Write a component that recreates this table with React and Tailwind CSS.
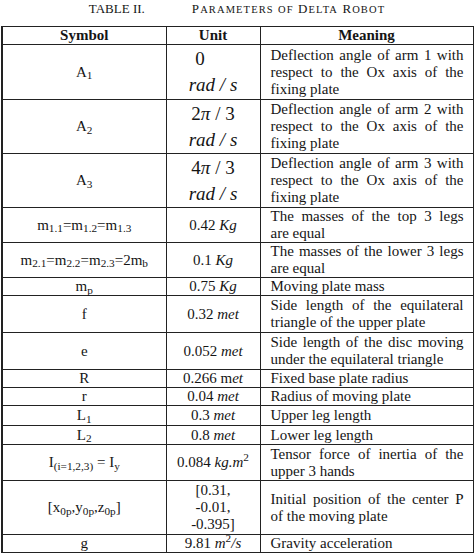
import React from "react";

function SmallCaps({ text }) {
  // manual small caps: source capitals stay full size, the rest shrink
  return (
    <span className="tracking-[1.1px]">
      {text.split(" ").map((word, i) => (
        <span key={i}>
          {i > 0 ? " " : ""}
          {word.split("").map((ch, j) =>
            ch === ch.toUpperCase() ? (
              <span key={j} className="text-[13px]">
                {ch}
              </span>
            ) : (
              <span key={j} className="text-[10.5px]">
                {ch.toUpperCase()}
              </span>
            )
          )}
        </span>
      ))}
    </span>
  );
}

function Angle({ top }) {
  return (
    <div className="text-[19px] leading-[26px]">
      <div>{top}</div>
      <div className="italic">rad / s</div>
    </div>
  );
}

const ROWS = [
  {
    h: "h-[55px]",
    sym: (
      <>
        A<sub>1</sub>
      </>
    ),
    unit: <Angle top={<span className="mr-[26px]">0</span>} />,
    mean: [
      "Deflection angle of arm 1 with",
      "respect to the Ox axis of the",
      "fixing plate",
    ],
  },
  {
    h: "h-[54px]",
    sym: (
      <>
        A<sub>2</sub>
      </>
    ),
    unit: (
      <Angle
        top={
          <>
            2<i>π</i> / 3
          </>
        }
      />
    ),
    mean: [
      "Deflection angle of arm 2 with",
      "respect to the Ox axis of the",
      "fixing plate",
    ],
  },
  {
    h: "h-[54px]",
    sym: (
      <>
        A<sub>3</sub>
      </>
    ),
    unit: (
      <Angle
        top={
          <>
            4<i>π</i> / 3
          </>
        }
      />
    ),
    mean: [
      "Deflection angle of arm 3 with",
      "respect to the Ox axis of the",
      "fixing plate",
    ],
  },
  {
    h: "h-[35px]",
    sym: (
      <>
        m<sub>1.1</sub>=m<sub>1.2</sub>=m<sub>1.3</sub>
      </>
    ),
    unit: (
      <>
        0.42 <i>Kg</i>
      </>
    ),
    mean: ["The masses of the top 3 legs", "are equal"],
  },
  {
    h: "h-[35px]",
    sym: (
      <>
        m<sub>2.1</sub>=m<sub>2.2</sub>=m<sub>2.3</sub>=2m<sub>b</sub>
      </>
    ),
    unit: (
      <>
        0.1 <i>Kg</i>
      </>
    ),
    mean: ["The masses of the lower 3 legs", "are equal"],
  },
  {
    h: "h-[18px]",
    sym: (
      <>
        m<sub>p</sub>
      </>
    ),
    unit: (
      <>
        0.75 <i>Kg</i>
      </>
    ),
    mean: ["Moving plate mass"],
  },
  {
    h: "h-[37px]",
    sym: "f",
    unit: (
      <>
        0.32 <i>met</i>
      </>
    ),
    mean: ["Side length of the equilateral", "triangle of the upper plate"],
  },
  {
    h: "h-[37px]",
    sym: "e",
    unit: (
      <>
        0.052 <i>met</i>
      </>
    ),
    mean: ["Side length of the disc moving", "under the equilateral triangle"],
  },
  {
    h: "h-[18px]",
    sym: "R",
    unit: (
      <>
        0.266 m<i>et</i>
      </>
    ),
    mean: ["Fixed base plate radius"],
  },
  {
    h: "h-[18px]",
    sym: "r",
    unit: (
      <>
        0.04 <i>met</i>
      </>
    ),
    mean: ["Radius of moving plate"],
  },
  {
    h: "h-[20px]",
    sym: (
      <>
        L<sub>1</sub>
      </>
    ),
    unit: (
      <>
        0.3 <i>met</i>
      </>
    ),
    mean: ["Upper leg length"],
  },
  {
    h: "h-[19px]",
    sym: (
      <>
        L<sub>2</sub>
      </>
    ),
    unit: (
      <>
        0.8 <i>met</i>
      </>
    ),
    mean: ["Lower leg length"],
  },
  {
    h: "h-[36px]",
    sym: (
      <>
        I<sub>(i=1,2,3)</sub> = I<sub>y</sub>
      </>
    ),
    unit: (
      <>
        0.084 <i>kg.m</i>
        <sup>2</sup>
      </>
    ),
    mean: ["Tensor force of inertia of the", "upper 3 hands"],
  },
  {
    h: "h-[54px]",
    sym: (
      <>
        [x<sub>0p</sub>,y<sub>0p</sub>,z<sub>0p</sub>]
      </>
    ),
    unit: (
      <>
        <div>[0.31,</div>
        <div>-0.01,</div>
        <div>-0.395]</div>
      </>
    ),
    mean: ["Initial position of the center P", "of the moving plate"],
  },
  {
    h: "h-[18px]",
    sym: "g",
    unit: (
      <>
        9.81 <i>m</i>
        <sup>2</sup>
        <i>/s</i>
      </>
    ),
    mean: ["Gravity acceleration"],
  },
];

export default function App() {
  return (
    <div className="h-[553px] w-[474px] overflow-hidden bg-white font-[family-name:'Liberation_Serif',serif] text-[15px] leading-[17px] text-[#151515]">
      <div className="flex h-[26px] justify-center gap-[47px] pt-[1px] text-[13px] leading-[16px]">
        <span>TABLE II.</span>
        <SmallCaps text="Parameters of Delta Robot" />
      </div>

      <table className="ml-[1px] w-[471px] table-fixed border-collapse">
        <colgroup>
          <col className="w-[164px]" />
          <col className="w-[94px]" />
          <col className="w-[213px]" />
        </colgroup>
        <thead>
          <tr className="h-[18px] font-bold">
            <th className="border border-l-2 border-[#222] p-0">Symbol</th>
            <th className="border border-[#222] p-0">Unit</th>
            <th className="border border-[#222] p-0">Meaning</th>
          </tr>
        </thead>
        <tbody>
          {ROWS.map((row, idx) => {
            const last = idx === ROWS.length - 1;
            return (
              <tr key={idx} className={row.h}>
                <td
                  className={`border border-l-2 border-[#222] p-0 text-center ${
                    last ? "border-b-2" : ""
                  }`}
                >
                  {row.sym}
                </td>
                <td
                  className={`border border-[#222] p-0 text-center ${
                    last ? "border-b-2" : ""
                  }`}
                >
                  {row.unit}
                </td>
                <td
                  className={`border border-[#222] py-0 pl-[10px] pr-[9px] ${
                    last ? "border-b-2" : ""
                  }`}
                >
                  {row.mean.map((line, i) => (
                    <div
                      key={i}
                      className={
                        i < row.mean.length - 1
                          ? "text-justify [text-align-last:justify]"
                          : "text-left"
                      }
                    >
                      {line}
                    </div>
                  ))}
                </td>
              </tr>
            );
          })}
        </tbody>
      </table>
    </div>
  );
}
